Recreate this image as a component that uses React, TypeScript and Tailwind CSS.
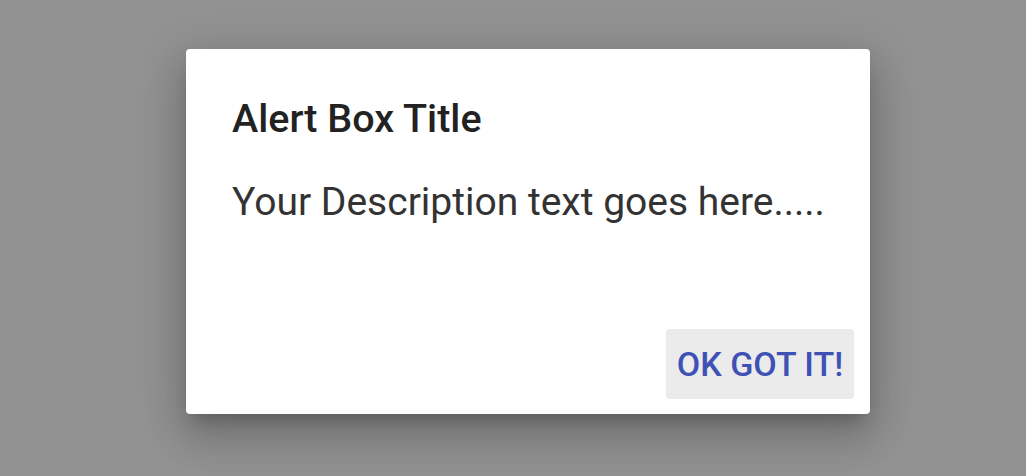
export default function App() {
  return (
    <div
      className="flex h-[476px] w-full items-start justify-center bg-[#929292] pt-[49px]"
      style={{ fontFamily: "Roboto, 'Liberation Sans', sans-serif" }}
    >
      <div className="ml-[30px] flex h-[365px] w-[684px] flex-col rounded-[4px] bg-white shadow-[0_11px_15px_-7px_rgba(0,0,0,0.2),0_24px_38px_3px_rgba(0,0,0,0.14),0_9px_46px_8px_rgba(0,0,0,0.12)]">
        <h2 className="px-[46px] pt-[46px] text-[39.5px] font-medium leading-[48px] text-[#222]">
          Alert Box Title
        </h2>
        <p className="mt-[36px] whitespace-nowrap pl-[46px] text-[39px] leading-[46px] text-[#333]">
          Your Description text goes here.....
        </p>
        <div className="mt-auto flex justify-end p-[15px] pr-[16px]">
          <button className="h-[70px] w-[188px] rounded-[4px] bg-[#ebebeb] text-[34px] font-medium text-[#3f51b5]">
            OK GOT IT!
          </button>
        </div>
      </div>
    </div>
  );
}
